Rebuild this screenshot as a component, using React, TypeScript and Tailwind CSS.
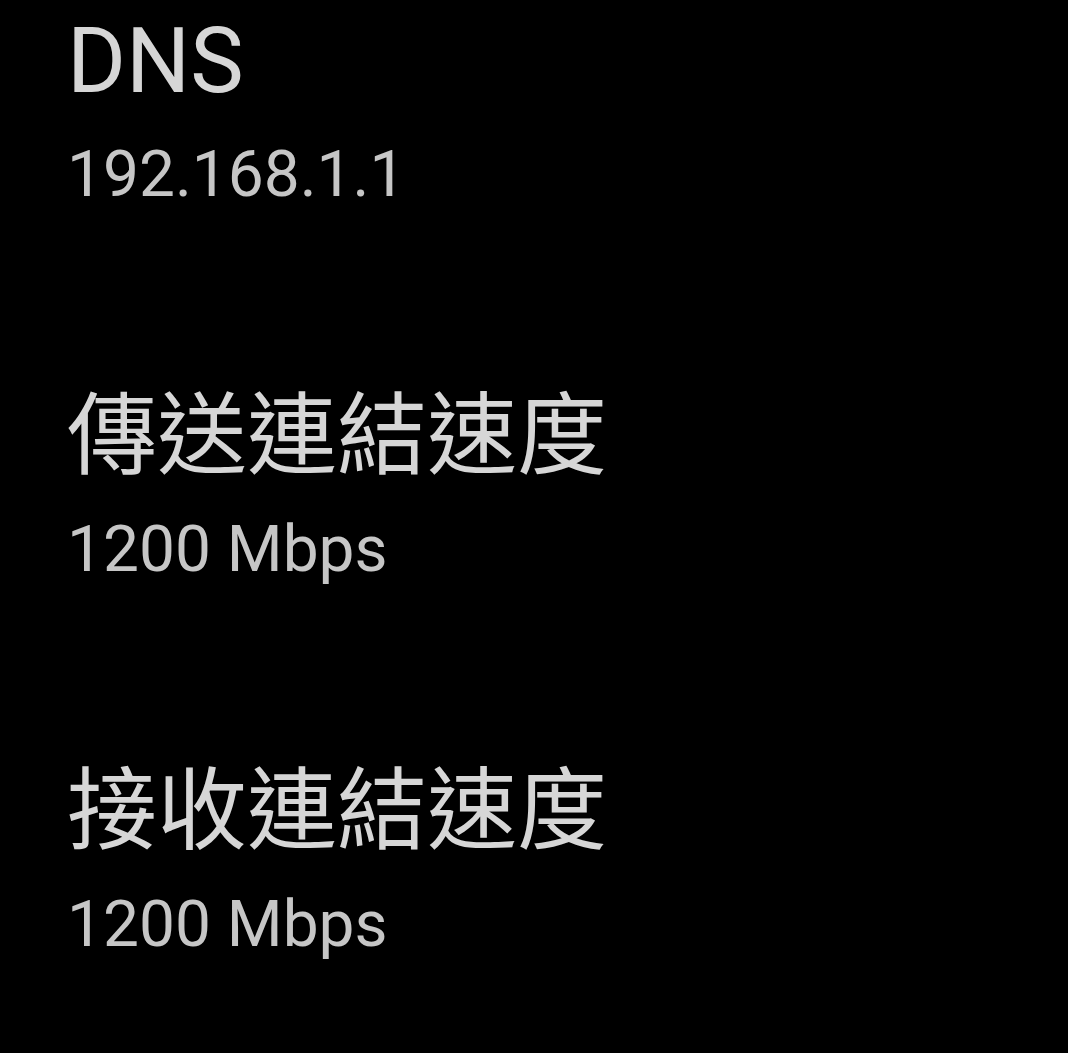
import React from "react";

const items = [
  { title: "DNS", value: "192.168.1.1" },
  { title: "傳送連結速度", value: "1200 Mbps" },
  { title: "接收連結速度", value: "1200 Mbps" },
];

export default function App() {
  return (
    <div
      className="w-full min-h-[1053px] h-[1053px] overflow-hidden bg-black pl-[67px] pt-[10px] flex flex-col gap-[173px]"
      style={{ fontFamily: 'Roboto, "Noto Sans CJK TC", sans-serif' }}
    >
      {items.map((it, i) => (
        <div key={i} className="flex flex-col">
          <div className="text-[90px] leading-[104px] text-[#d6d6d6] whitespace-nowrap">
            {it.title}
          </div>
          <div className="mt-[24px] text-[64px] leading-[74px] text-[#c6c6c6] whitespace-nowrap">
            {it.value}
          </div>
        </div>
      ))}
    </div>
  );
}
